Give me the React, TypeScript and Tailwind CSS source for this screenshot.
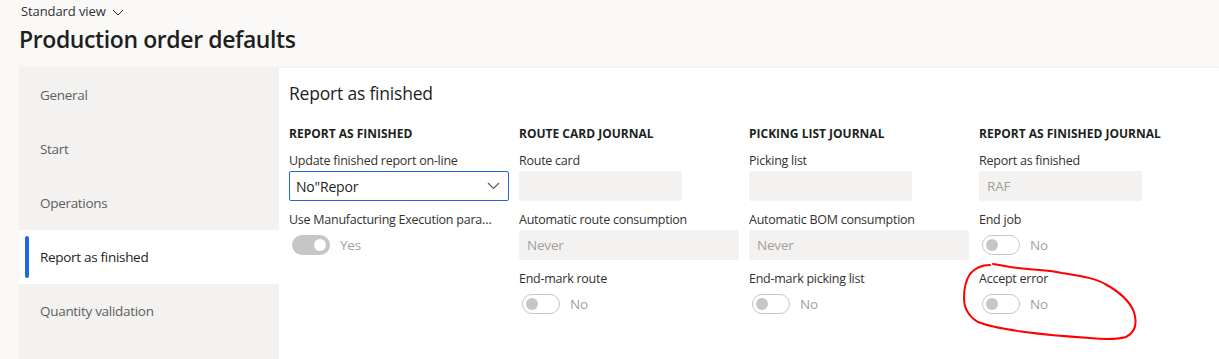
import React from "react";

const font = { fontFamily: '"Segoe UI", "Open Sans", "Noto Sans", sans-serif' };

const navItems = ["General", "Start", "Operations", "Report as finished", "Quantity validation"];

const Toggle: React.FC<{ on?: boolean; text: string }> = ({ on, text }) => (
  <div className="flex h-[30px] items-center pl-[3px]">
    {on ? (
      <div className="flex h-[20px] w-[38px] items-center justify-end rounded-full bg-[#c8c6c4] pr-[4px]">
        <div className="h-[12px] w-[12px] rounded-full bg-white" />
      </div>
    ) : (
      <div className="flex h-[20px] w-[38px] items-center rounded-full border border-[#c8c6c4] bg-white pl-[3px]">
        <div className="h-[12px] w-[12px] rounded-full bg-[#c8c6c4]" />
      </div>
    )}
    <span className="ml-[10px] text-[13.5px] tracking-[-0.2px] text-[#a19f9d]">{text}</span>
  </div>
);

const Label: React.FC<{ children: React.ReactNode }> = ({ children }) => (
  <div className="h-[20px] truncate text-[12.5px] leading-[20px] tracking-[-0.25px] text-[#323130]">{children}</div>
);

const ReadOnly: React.FC<{ value?: string; wide?: boolean }> = ({ value, wide }) => (
  <div
    className={`flex h-[30px] items-center rounded-[2px] bg-[#f3f2f1] px-[8px] text-[13.5px] tracking-[-0.2px] text-[#a19f9d] ${
      wide ? "w-[220px]" : "w-[163px]"
    }`}
  >
    {value}
  </div>
);

const Field: React.FC<{ label: string; children: React.ReactNode }> = ({ label, children }) => (
  <div className="mb-[9px]">
    <Label>{label}</Label>
    {children}
  </div>
);

const Header: React.FC<{ children: React.ReactNode }> = ({ children }) => (
  <div className="mb-[9px] h-[16px] text-[12px] font-bold leading-[16px] text-[#201f1e]">{children}</div>
);

export default function App() {
  return (
    <div className="relative h-[359px] w-[1219px] overflow-hidden bg-[#faf9f8]" style={font}>
      <div className="pl-[21px] pt-[2px]">
        <div className="flex h-[20px] items-center text-[13px] tracking-[-0.1px] text-[#323130]">
          Standard view
          <svg className="ml-[6px]" width="12" height="7" viewBox="0 0 12 7" fill="none">
            <path d="M1 1l5 5 5-5" stroke="#323130" strokeWidth="1" />
          </svg>
        </div>
      </div>
      <div className="pl-[19px]">
        <h1 className="h-[40px] text-[23px] font-semibold leading-[34px] tracking-[-0.4px] text-[#201f1e]">
          Production order defaults
        </h1>
      </div>

      <div className="ml-[19px] mt-[6px] flex h-[300px] shadow-[0_-1px_2px_rgba(0,0,0,0.04)]">
        <div className="w-[260px] bg-[#f3f2f1]">
          {navItems.map((item) => {
            const active = item === "Report as finished";
            return (
              <div
                key={item}
                className={`relative flex h-[54px] items-center pl-[21px] text-[13.5px] tracking-[-0.3px] ${
                  active ? "bg-white text-[#201f1e]" : "text-[#605e5c]"
                }`}
              >
                {active && <div className="absolute left-[6px] top-[6px] h-[42px] w-[4px] rounded-full bg-[#2266e3]" />}
                {item}
              </div>
            );
          })}
        </div>

        <div className="flex-1 bg-white pl-[10px]">
          <div className="mt-[13px] h-[24px] text-[17.5px] font-normal leading-[24px] tracking-[-0.2px] text-[#201f1e]">
            Report as finished
          </div>
          <div className="mt-[21px] grid grid-cols-[230px_230px_230px_230px]">
            <div>
              <Header>REPORT AS FINISHED</Header>
              <Field label="Update finished report on-line">
                <div className="flex h-[30px] w-[220px] items-center justify-between rounded-[2px] border border-[#2266e3] pl-[6px] pr-[8px] text-[14px] tracking-[-0.2px] text-[#201f1e]">
                  <span>No"Repor</span>
                  <svg width="13" height="8" viewBox="0 0 13 8" fill="none">
                    <path d="M1 1l5.5 5.5L12 1" stroke="#605e5c" strokeWidth="1.2" />
                  </svg>
                </div>
              </Field>
              <div className="w-[210px]">
                <Label>Use Manufacturing Execution parameters</Label>
              </div>
              <Toggle on text="Yes" />
            </div>

            <div>
              <Header>ROUTE CARD JOURNAL</Header>
              <Field label="Route card">
                <ReadOnly />
              </Field>
              <Field label="Automatic route consumption">
                <ReadOnly value="Never" wide />
              </Field>
              <Label>End-mark route</Label>
              <Toggle text="No" />
            </div>

            <div>
              <Header>PICKING LIST JOURNAL</Header>
              <Field label="Picking list">
                <ReadOnly />
              </Field>
              <Field label="Automatic BOM consumption">
                <ReadOnly value="Never" wide />
              </Field>
              <Label>End-mark picking list</Label>
              <Toggle text="No" />
            </div>

            <div>
              <Header>REPORT AS FINISHED JOURNAL</Header>
              <Field label="Report as finished">
                <ReadOnly value="RAF" />
              </Field>
              <Field label="End job">
                <Toggle text="No" />
              </Field>
              <Label>Accept error</Label>
              <Toggle text="No" />
            </div>
          </div>
        </div>
      </div>

      <svg className="pointer-events-none absolute left-0 top-0" width="1219" height="359" viewBox="0 0 1219 359" fill="none">
        <path
          d="M993 264 C1000 265 1005 266 1010 267 C1030 270 1050 270 1062 273 C1080 276 1095 278 1105 284 C1120 292 1130 302 1134 312 C1137 322 1136 332 1126 337 C1115 340 1100 339 1090 338 C1060 336 1040 334 1025 332 C1005 329 990 327 978 322 C968 316 964 308 964 298 C964 288 966 280 970 274 C975 268 982 265 990 265"
          stroke="#ff0000"
          strokeWidth="2"
          strokeLinecap="round"
        />
      </svg>
    </div>
  );
}
